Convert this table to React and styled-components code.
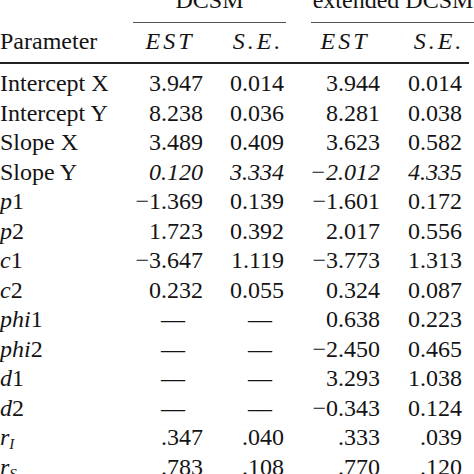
import React from "react";
import styled, { createGlobalStyle } from "styled-components";

const GlobalStyle = createGlobalStyle`
  html, body {
    margin: 0;
    padding: 0;
    background: #fff;
  }
  body {
    width: 474px;
    height: 474px;
    overflow: hidden;
  }
`;

const rows = [
  { name: "Intercept X", v: ["3.947", "0.014", "3.944", "0.014"] },
  { name: "Intercept Y", v: ["8.238", "0.036", "8.281", "0.038"] },
  { name: "Slope X", v: ["3.489", "0.409", "3.623", "0.582"] },
  { name: "Slope Y", v: ["0.120", "3.334", "\u22122.012", "4.335"], italic: true },
  { name: "p", sub: "1", v: ["\u22121.369", "0.139", "\u22121.601", "0.172"], sym: true },
  { name: "p", sub: "2", v: ["1.723", "0.392", "2.017", "0.556"], sym: true },
  { name: "c", sub: "1", v: ["\u22123.647", "1.119", "\u22123.773", "1.313"], sym: true },
  { name: "c", sub: "2", v: ["0.232", "0.055", "0.324", "0.087"], sym: true },
  { name: "phi", sub: "1", v: [null, null, "0.638", "0.223"], sym: true },
  { name: "phi", sub: "2", v: [null, null, "\u22122.450", "0.465"], sym: true },
  { name: "d", sub: "1", v: [null, null, "3.293", "1.038"], sym: true },
  { name: "d", sub: "2", v: [null, null, "\u22120.343", "0.124"], sym: true },
  { name: "r", low: "I", v: [".347", ".040", ".333", ".039"] },
  { name: "r", low: "S", v: [".783", ".108", ".770", ".120"] },
];

const Table = styled.div`
  margin-top: -14px;
  display: grid;
  grid-template-columns: 135px 70px 81px 96px 87px;
  font-family: "Liberation Serif", "Times New Roman", serif;
  font-size: 24px;
  line-height: 29.5px;
  color: #141414;
`;

const GroupHead = styled.div`
  grid-column: ${(p) => p.$span};
  text-align: center;
  padding-bottom: 6px;
  margin: 0 ${(p) => p.$right || 0}px 4.5px ${(p) => p.$left || 0}px;
  border-bottom: 1px solid #555;
`;

const Blank = styled.div`
  grid-column: 1;
`;

const HeadCell = styled.div`
  padding-bottom: 5px;
  border-bottom: 2px solid #222;
  text-align: ${(p) => (p.$left ? "left" : "center")};
  padding-left: ${(p) => p.$pl || 0}px;
  font-style: ${(p) => (p.$left ? "normal" : "italic")};
  letter-spacing: ${(p) => (p.$left ? "0" : "3px")};
  margin-bottom: 5.5px;
`;

const NameCell = styled.div`
  white-space: nowrap;
  font-style: ${(p) => (p.$italic ? "italic" : "normal")};
`;

const Num = styled.div`
  text-align: right;
  padding-right: ${(p) => p.$pr}px;
  font-style: ${(p) => (p.$italic ? "italic" : "normal")};
  white-space: nowrap;
`;

const Sub = styled.span`
  font-style: normal;
`;

const Low = styled.sub`
  font-size: 15px;
  vertical-align: -4px;
  line-height: 0;
`;

const dashPad = [20, 14];
const numPad = [2, 2, 2, 7];

function Name({ row }) {
  if (row.sym) {
    return (
      <NameCell $italic>
        {row.name}
        <Sub>{row.sub}</Sub>
      </NameCell>
    );
  }
  if (row.low) {
    return (
      <NameCell $italic>
        r<Low>{row.low}</Low>
      </NameCell>
    );
  }
  return <NameCell>{row.name}</NameCell>;
}

export default function App() {
  return (
    <>
      <GlobalStyle />
      <Table>
        <Blank />
        <GroupHead $span="2 / 4" $right={0} $left={-2}>
          DCSM
        </GroupHead>
        <GroupHead $span="4 / 6" $left={25} $right={-6}>
          extended DCSM
        </GroupHead>

        <HeadCell $left>Parameter</HeadCell>
        <HeadCell $pl={0}>EST</HeadCell>
        <HeadCell $pl={25}>S.E.</HeadCell>
        <HeadCell $pl={22}>EST</HeadCell>
        <HeadCell $pl={27}>S.E.</HeadCell>

        {rows.map((row) => (
          <React.Fragment key={row.name + (row.sub || row.low || "")}>
            <Name row={row} />
            {row.v.map((val, i) =>
              val === null ? (
                <Num key={i} $pr={dashPad[i]}>
                  {"\u2014"}
                </Num>
              ) : (
                <Num key={i} $pr={numPad[i]} $italic={row.italic}>
                  {val}
                </Num>
              )
            )}
          </React.Fragment>
        ))}
      </Table>
    </>
  );
}
